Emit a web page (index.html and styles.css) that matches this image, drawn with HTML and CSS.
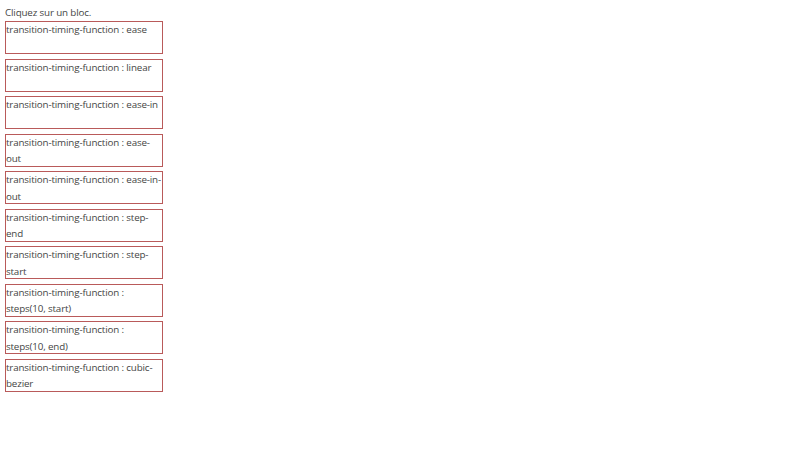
FILE: index.html
```html
<!DOCTYPE html>
<html lang="fr">
<head>
    <meta charset="UTF-8">
    <meta name="viewport" content="width=device-width, initial-scale=1.0">
    <title>transition-timing-function</title>
    <link rel="stylesheet" href="styles.css">
</head>
<body>
    <p class="hint">Cliquez sur un bloc.</p>
    <div class="blocs">
        <div class="bloc">transition-timing-function : ease</div>
        <div class="bloc">transition-timing-function : linear</div>
        <div class="bloc">transition-timing-function : ease-in</div>
        <div class="bloc">transition-timing-function : ease-out</div>
        <div class="bloc">transition-timing-function : ease-in-out</div>
        <div class="bloc">transition-timing-function : step-end</div>
        <div class="bloc">transition-timing-function : step-start</div>
        <div class="bloc">transition-timing-function : steps(10, start)</div>
        <div class="bloc">transition-timing-function : steps(10, end)</div>
        <div class="bloc">transition-timing-function : cubic-bezier</div>
    </div>
</body>
</html>
```

FILE: styles.css
```css
body {
    font-family: "Open Sans", "Noto Sans", sans-serif;
    font-size: 9.8px;
    letter-spacing: -0.15px;
    line-height: 16.5px;
    color: #444;
    background: white;
    margin: 5px;
}

.hint {
    margin: 0;
    line-height: 16px;
}

.blocs {
    display: flex;
    flex-direction: column;
    gap: 4.5px;
}

.bloc {
    width: 156px;
    height: 31px;
    border: 1px solid #b95a5a;
    overflow: hidden;
}
```
